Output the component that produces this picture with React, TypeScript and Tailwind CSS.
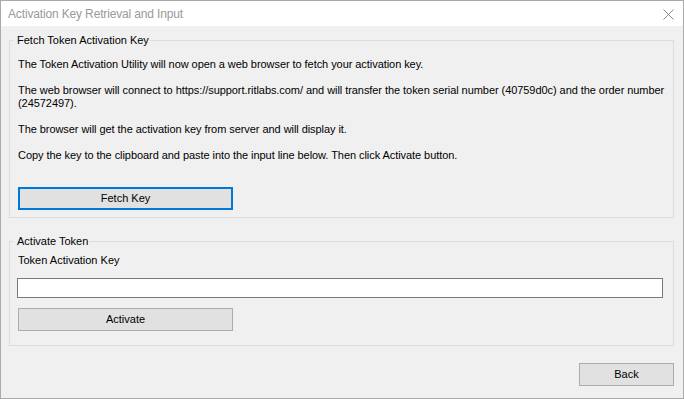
import React from "react";

const Button = ({ label, focused = false }: { label: string; focused?: boolean }) => (
  <button
    className={
      "w-full h-[23px] bg-[#e1e1e1] text-[11px] leading-none text-black " +
      (focused ? "border-2 border-[#0078d7]" : "border border-[#adadad]")
    }
  >
    {label}
  </button>
);

const App = () => {
  return (
    <div className="w-[684px] h-[399px] border border-[#aaaaaa] bg-[#f0f0f0] flex flex-col font-['Liberation_Sans',Arial,sans-serif] text-[11px] text-black">
      {/* Title bar */}
      <div className="h-[25px] bg-white flex items-center justify-between pl-[7px] pr-[9px] shrink-0">
        <span className="text-[12px] tracking-[-0.15px] text-[#999999]">Activation Key Retrieval and Input</span>
        <svg width="11" height="11" viewBox="0 0 11 11" className="mt-[1px]">
          <path d="M0.5 0.5 L10.5 10.5 M10.5 0.5 L0.5 10.5" stroke="#8a8a8a" strokeWidth="1" />
        </svg>
      </div>

      <div className="flex-1 flex flex-col pl-[8px] pr-[9px] pt-[8px]">
        {/* Fetch group */}
        <fieldset className="border border-[#dcdcdc] pl-[3px] pr-[9px] pb-[7px]">
          <legend className="pl-[4px] pr-[1px] leading-[13px]">Fetch Token Activation Key</legend>
          <div className="pl-[4px] pt-[11px] flex flex-col">
            <div className="pl-[1px] leading-[13px] tracking-[-0.06px] whitespace-nowrap flex flex-col gap-[13px]">
              <p>The Token Activation Utility will now open a web browser to fetch your activation key.</p>
              <p>
                The web browser will connect to https://support.ritlabs.com/ and will transfer the token serial number (40759d0c) and the order number
                <br />
                (24572497).
              </p>
              <p>The browser will get the activation key from server and will display it.</p>
              <p>Copy the key to the clipboard and paste into the input line below. Then click Activate button.</p>
            </div>
            <div className="mt-[25px] ml-[1px] w-[215px] flex">
              <Button label="Fetch Key" focused />
            </div>
          </div>
        </fieldset>

        {/* Activate group */}
        <fieldset className="mt-[17px] border border-[#dcdcdc] pl-[3px] pr-[10px] pb-[14px]">
          <legend className="pl-[4px] pr-[1px] leading-[13px]">Activate Token</legend>
          <div className="pl-[4px] pt-[6px] flex flex-col">
            <p className="pl-[1px] leading-[13px]">Token Activation Key</p>
            <input className="mt-[11px] h-[20px] w-full bg-white border border-[#7a7a7a] outline-none px-[2px] text-[11px]" />
            <div className="mt-[10px] ml-[1px] w-[215px] flex">
              <Button label="Activate" />
            </div>
          </div>
        </fieldset>

        <div className="mt-[17px] self-end w-[95px] flex">
          <Button label="Back" />
        </div>
      </div>
    </div>
  );
};

export default App;
